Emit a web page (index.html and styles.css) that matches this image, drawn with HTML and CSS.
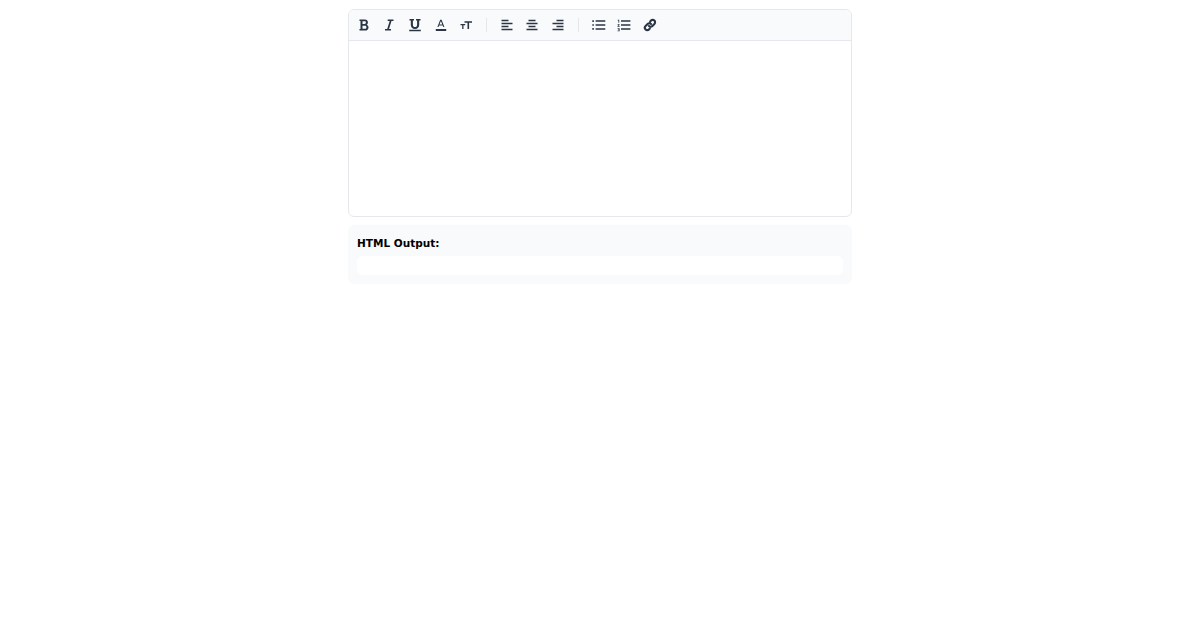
FILE: index.html
```html
<!DOCTYPE html>
<html lang="en">
<head>
  <meta charset="UTF-8" />
  <title>Rich Text Editor</title>
  <link rel="stylesheet" href="styles.css">
</head>
<body>
  <div class="wrapper">
    <div class="editor">
      <div class="toolbar">
        <div class="tool-group">
          <button class="tool"><svg viewBox="0 0 14 14"><path fill-rule="evenodd" d="M2.500 1.500h5.300c2 0 3.100 1.200 3.100 2.900 0 1-.5 1.900-1.300 2.300 1.200.4 1.900 1.400 1.900 2.700 0 2-1.400 3.100-3.500 3.100H2.500v-1.600h1V3.100h-1zM5.500 3.200v2.800h2.100c.9 0 1.300-.5 1.300-1.400s-.4-1.400-1.300-1.400zM5.500 7.700v3.100h2.400c1 0 1.500-.6 1.500-1.550S8.900 7.700 7.900 7.700z"/></svg></button>
          <button class="tool"><svg viewBox="0 0 14 14"><path d="M5.700 1.500h5.800V3H9.500L7 11h2v1.500H3V11h2.200L7.700 3h-2z"/></svg></button>
          <button class="tool"><svg viewBox="0 0 14 14"><path d="M1.500 1h4.500v1.400H4.900v4.300c0 1.500.8 2.400 2.100 2.400s2.100-.9 2.100-2.400V2.400H8V1h4.500v1.400h-1.300v4.300c0 2.700-1.600 4.200-4.200 4.200S2.800 9.400 2.800 6.700V2.400H1.500zM1.200 11.800h11.600v1.500H1.200z"/></svg></button>
          <button class="tool"><svg viewBox="0 0 14 14"><path d="M6.200 1.800h1.400l2.800 7.300H9.300L8.700 7.600H5.100l-.6 1.500H3.400zM5.500 6.500h2.800L6.900 3.100zM1.800 11h10.400v2H1.800z"/></svg></button>
          <button class="tool"><svg viewBox="0 0 14 14"><path d="M5.500 3.200h7.500v1.500h-2.900v6.200H8.500V4.700h-3zM1.500 6h4.700v1.200H4.500v3.700H3.200V7.200H1.500z"/></svg></button>
        </div>
        <div class="tool-group">
          <button class="tool"><svg viewBox="0 0 14 14"><path d="M1.500 1.800h7v1.500h-7zM1.500 4.800h11v1.500h-11zM1.500 7.800h7v1.500h-7zM1.500 10.800h11v1.500h-11z"/></svg></button>
          <button class="tool"><svg viewBox="0 0 14 14"><path d="M3.500 1.800h7v1.500h-7zM1.500 4.800h11v1.500h-11zM3.500 7.800h7v1.500h-7zM1.500 10.800h11v1.500h-11z"/></svg></button>
          <button class="tool"><svg viewBox="0 0 14 14"><path d="M5.500 1.800h7v1.500h-7zM1.500 4.800h11v1.500h-11zM5.500 7.800h7v1.500h-7zM1.500 10.800h11v1.500h-11z"/></svg></button>
        </div>
        <div class="tool-group">
          <button class="tool"><svg viewBox="0 0 14 14"><path d="M.3 2.300h1.600v1.600H.3zM.3 6.200h1.600v1.600H.3zM.3 10.100h1.600v1.600H.3zM3.600 2.300h9.700v1.500H3.600zM3.600 6.250h9.700v1.500H3.600zM3.600 10.200h9.700v1.500H3.600z"/></svg></button>
          <button class="tool"><svg viewBox="0 0 14 14"><path d="M.7 1.800h1.500v3H1.400V2.600H.7zM.6 6.300h2v.7l-1.100 1h1.100v.7H.5V8l1.100-1H.6zM.6 10.200h2v3H.6v-.6h1.200V12h-.9v-.6h.9v-.5H.6zM4 2.300h9.400v1.500H4zM4 6.250h9.400v1.500H4zM4 10.200h9.400v1.500H4z"/></svg></button>
          <button class="tool"><svg viewBox="0 0 14 14"><path class="link" d="M6 8a2.400 2.400 0 0 0 3.400 0l2-2a2.400 2.400 0 0 0-3.400-3.400l-.8.8M8 6a2.400 2.400 0 0 0-3.400 0l-2 2A2.400 2.400 0 0 0 6 11.400l.8-.8"/></svg></button>
        </div>
      </div>
      <div class="content" contenteditable="true"></div>
    </div>

    <div class="output">
      <h3>HTML Output:</h3>
      <pre class="output-code"></pre>
    </div>
  </div>
</body>
</html>
```

FILE: styles.css
```css
body {
    font-family: "DejaVu Sans", sans-serif;
    margin: 0;
    background-color: #ffffff;
    color: #000000;
}

.wrapper {
    width: 504px;
    margin: 0 auto;
    padding-top: 9px;
}

.editor {
    border: 1px solid #e5e7eb;
    border-radius: 6px;
    overflow: hidden;
}

.toolbar {
    display: flex;
    align-items: center;
    height: 30px;
    padding: 0 2px;
    background-color: #f9fafb;
    border-bottom: 1px solid #e5e7eb;
}

.tool-group {
    display: flex;
    align-items: center;
    height: 14px;
    padding-right: 7px;
    margin-right: 7px;
    border-right: 1px solid #e5e7eb;
}

.tool-group:last-child {
    border-right: none;
}

.tool {
    display: flex;
    align-items: center;
    justify-content: center;
    width: 25.6px;
    height: 24px;
    padding: 0;
    border: none;
    background: none;
}

.tool svg {
    width: 14px;
    height: 14px;
    fill: #2b3544;
}

.tool svg .link {
    fill: none;
    stroke: #2b3544;
    stroke-width: 2.1;
    stroke-linecap: round;
}

.content {
    height: 175px;
    outline: none;
}

.output {
    margin-top: 8px;
    padding: 9px;
    background-color: #f9fafb;
    border-radius: 6px;
}

.output h3 {
    margin: 1px 0 5px;
    font-size: 10.5px;
    line-height: 16px;
    font-weight: bold;
}

.output-code {
    margin: 0;
    height: 19px;
    background-color: #ffffff;
    border-radius: 6px;
}
```
